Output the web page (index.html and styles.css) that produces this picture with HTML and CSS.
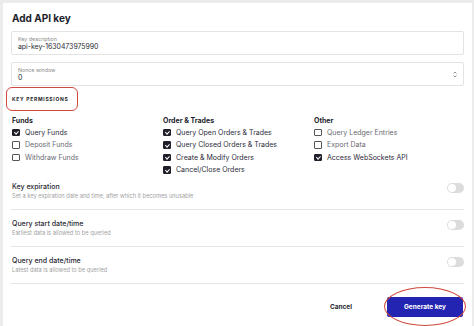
FILE: index.html
```html
<!DOCTYPE html>
<html lang="en">
<head>
    <meta charset="UTF-8">
    <meta name="viewport" content="width=device-width, initial-scale=1.0">
    <title>Add API key</title>
    <link rel="stylesheet" href="styles.css">
</head>
<body>
    <div class="modal">
        <h2 class="title">Add API key</h2>

        <div class="field">
            <div class="field-label">Key description</div>
            <div class="field-value">api-key-1630473975990</div>
        </div>

        <div class="field field-number">
            <div class="field-label">Nonce window</div>
            <div class="field-value">0</div>
            <svg class="spin" width="4" height="7" viewBox="0 0 4 7">
                <path d="M0.5 2.5 L2 1 L3.5 2.5" fill="none" stroke="#777" stroke-width="0.8"/>
                <path d="M0.5 4.5 L2 6 L3.5 4.5" fill="none" stroke="#777" stroke-width="0.8"/>
            </svg>
        </div>

        <div class="section-title">
            KEY PERMISSIONS
            <span class="ring ring-heading"></span>
        </div>

        <div class="perm-grid">
            <div class="perm-col">
                <div class="perm-head">Funds</div>
                <label class="perm on"><span class="box"></span>Query Funds</label>
                <label class="perm"><span class="box"></span>Deposit Funds</label>
                <label class="perm"><span class="box"></span>Withdraw Funds</label>
            </div>
            <div class="perm-col">
                <div class="perm-head">Order &amp; Trades</div>
                <label class="perm on"><span class="box"></span>Query Open Orders &amp; Trades</label>
                <label class="perm on"><span class="box"></span>Query Closed Orders &amp; Trades</label>
                <label class="perm on"><span class="box"></span>Create &amp; Modify Orders</label>
                <label class="perm on"><span class="box"></span>Cancel/Close Orders</label>
            </div>
            <div class="perm-col">
                <div class="perm-head">Other</div>
                <label class="perm"><span class="box"></span>Query Ledger Entries</label>
                <label class="perm"><span class="box"></span>Export Data</label>
                <label class="perm on"><span class="box"></span>Access WebSockets API</label>
            </div>
        </div>

        <div class="settings">
            <div class="setting">
                <div>
                    <div class="setting-title">Key expiration</div>
                    <div class="setting-desc">Set a key expiration date and time, after which it becomes unusable</div>
                </div>
                <span class="toggle"></span>
            </div>
            <div class="setting">
                <div>
                    <div class="setting-title">Query start date/time</div>
                    <div class="setting-desc">Earliest data is allowed to be queried</div>
                </div>
                <span class="toggle"></span>
            </div>
            <div class="setting">
                <div>
                    <div class="setting-title">Query end date/time</div>
                    <div class="setting-desc">Latest data is allowed to be queried</div>
                </div>
                <span class="toggle"></span>
            </div>
        </div>

        <div class="footer">
            <button class="btn-cancel" type="button">Cancel</button>
            <button class="btn-primary" type="button">
                Generate key
                <span class="ring ring-button"></span>
            </button>
        </div>
    </div>
</body>
</html>
```

FILE: styles.css
```css
body {
    margin: 0;
    background-color: #ececec;
    font-family: Inter, "Noto Sans", sans-serif;
    color: #1d1d2b;
    height: 326px;
    overflow: hidden;
}
.modal {
    margin: 3px 2px 0 3px;
    padding: 8px 8px 0 8px;
    background-color: #fff;
    height: 323px;
    box-sizing: border-box;
}
.title {
    margin: 0;
    font-size: 10px;
    line-height: 14px;
    font-weight: 700;
    padding-left: 1px;
}
.field {
    position: relative;
    margin-top: 6px;
    height: 24px;
    box-sizing: border-box;
    border: 1px solid #e3e3e3;
    border-radius: 2px;
    padding: 4px 6px 0 6px;
}
.field-number {
    margin-top: 7px;
}
.field-label {
    font-size: 5.3px;
    line-height: 6px;
    color: #8a8a8a;
}
.field-value {
    font-size: 6.9px;
    line-height: 10px;
    color: #2a2a33;
}
.spin {
    position: absolute;
    right: 6px;
    top: 8px;
}
.section-title {
    position: relative;
    margin-top: 8px;
    padding-left: 1px;
    font-size: 5px;
    line-height: 11px;
    font-weight: 700;
    letter-spacing: 0.7px;
}
.ring {
    position: absolute;
    border: 1.5px solid #cf4a3c;
    box-sizing: border-box;
    pointer-events: none;
}
.ring-heading {
    left: -5px;
    top: -7px;
    width: 72px;
    height: 24px;
    border-radius: 6px;
}
.perm-grid {
    display: grid;
    grid-template-columns: 151px 151px 151px;
    margin-top: 11px;
    padding-left: 1px;
}
.perm-head {
    font-size: 7px;
    line-height: 10px;
    font-weight: 700;
}
.perm {
    display: flex;
    align-items: center;
    height: 12.5px;
    font-size: 7px;
    color: #6a6a72;
}
.perm.on {
    color: #2b2b3a;
}
.box {
    width: 7.5px;
    height: 7.5px;
    border: 1px solid #555;
    border-radius: 1px;
    margin-right: 5.5px;
    box-sizing: border-box;
    position: relative;
}
.perm.on .box {
    background-color: #1f1f2a;
    border-color: #1f1f2a;
}
.perm.on .box::after {
    content: "";
    position: absolute;
    left: 1.6px;
    top: 0.5px;
    width: 1.5px;
    height: 3px;
    border: solid #fff;
    border-width: 0 1px 1px 0;
    transform: rotate(45deg);
}
.settings {
    margin-top: 6px;
}
.setting {
    display: flex;
    justify-content: space-between;
    align-items: flex-start;
    padding: 9px 0 9px 1px;
    border-bottom: 1px solid #e6e6e6;
}
.setting:first-child {
    padding-top: 0;
}
.setting-title {
    font-size: 7px;
    line-height: 10px;
    font-weight: 500;
    color: #2a2a33;
}
.setting-desc {
    font-size: 5.7px;
    line-height: 8px;
    color: #a2a2a2;
}
.toggle {
    position: relative;
    width: 17px;
    height: 10px;
    margin-top: 1px;
    border-radius: 5px;
    background-color: #dcdcdc;
}
.toggle::after {
    content: "";
    position: absolute;
    left: 1px;
    top: 1px;
    width: 8px;
    height: 8px;
    border-radius: 50%;
    background-color: #fff;
}
.footer {
    display: flex;
    justify-content: flex-end;
    align-items: center;
    padding-top: 13px;
    padding-right: 1px;
}
.btn-cancel {
    border: none;
    background: none;
    font-family: inherit;
    font-size: 6.5px;
    font-weight: 700;
    color: #2a2a33;
    padding: 0;
    margin-right: 35px;
}
.btn-primary {
    position: relative;
    width: 76px;
    height: 20px;
    border: none;
    border-radius: 2px;
    background-color: #2424b2;
    color: #fff;
    font-family: inherit;
    font-size: 6.5px;
    font-weight: 700;
}
.ring-button {
    left: -3px;
    top: -10px;
    width: 82px;
    height: 39px;
    border-radius: 50%;
}
```
